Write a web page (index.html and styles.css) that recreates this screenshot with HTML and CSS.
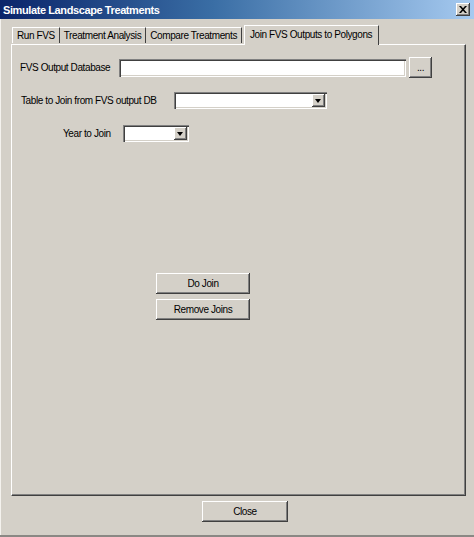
FILE: index.html
```html
<!DOCTYPE html>
<html lang="en">
<head>
  <meta charset="UTF-8">
  <title>Simulate Landscape Treatments</title>
  <link rel="stylesheet" href="styles.css">
</head>
<body>
  <div class="window">
    <!-- title bar -->
    <div class="titlebar">
      <span class="title">Simulate Landscape Treatments</span>
      <span class="close-x">
        <svg width="8" height="7" viewBox="0 0 8 7"><path d="M0 0h2l2 2.3L6 0h2L5 3.5 8 7H6L4 4.7 2 7H0l3-3.5z" fill="#000"/></svg>
      </span>
    </div>

    <!-- tab strip -->
    <div class="tabs">
      <div class="tab">Run FVS</div>
      <div class="tab">Treatment Analysis</div>
      <div class="tab">Compare Treatments</div>
      <div class="tab active">Join FVS Outputs to Polygons</div>
    </div>

    <!-- tab page -->
    <div class="panel">
      <div class="row row-db">
        <label class="lbl lbl-db">FVS Output Database</label>
        <div class="textbox tb-db"></div>
        <button class="btn btn-browse">...</button>
      </div>
      <div class="row row-table">
        <label class="lbl lbl-table">Table to Join from FVS output DB</label>
        <div class="combo combo-table"><span class="arrow"></span></div>
      </div>
      <div class="row row-year">
        <label class="lbl lbl-year">Year to Join</label>
        <div class="combo combo-year"><span class="arrow"></span></div>
      </div>
      <div class="actions">
        <button class="btn btn-wide">Do Join</button>
        <button class="btn btn-wide">Remove Joins</button>
      </div>
    </div>

    <div class="footer">
      <button class="btn btn-close">Close</button>
    </div>
  </div>
</body>
</html>
```

FILE: styles.css
```css
/* classic windows dialog */
body {
  margin: 0;
  font-family: "Liberation Sans", Arial, sans-serif;
  font-size: 10px;
  letter-spacing: -0.4px;
  color: #000;
  background: #d4d0c8;
}
.window {
  width: 474px;
  height: 537px;
  box-sizing: border-box;
  background: #d4d0c8;
  box-shadow: inset 1px 0 #f4f2ee;
  border-bottom: 2px solid #8a8884;
  overflow: hidden;
}
.titlebar {
  height: 19px;
  display: flex;
  align-items: center;
  justify-content: space-between;
  padding: 0 4px 0 3px;
  background: linear-gradient(to right, #0a246a 0%, #3a6ea5 45%, #a6caf0 100%);
}
.title {
  color: #fff;
  font-weight: bold;
  font-size: 11px;
}
.close-x {
  width: 14px;
  height: 13px;
  display: flex;
  align-items: center;
  justify-content: center;
  background: #d4d0c8;
  box-shadow: inset -1px -1px #404040, inset 1px 1px #fff, inset -2px -2px #808080;
}
/* tabs */
.tabs {
  display: flex;
  align-items: flex-end;
  margin-top: 6px;
  padding-left: 12px;
  height: 19px;
  position: relative;
  z-index: 1;
}
.tab {
  height: 16px;
  line-height: 16px;
  padding: 0 4px;
  border-top: 1px solid #fff;
  border-left: 1px solid #fff;
  border-right: 1px solid #404040;
  box-sizing: border-box;
  margin-bottom: 1px;
  white-space: nowrap;
}
.tab + .tab {
  border-left: none;
}
.tab.active {
  height: 20px;
  line-height: 17px;
  margin-left: 2px;
  margin-bottom: -1px;
  padding: 0 6px 0 5px;
  border-left: 1px solid #fff;
  background: #d4d0c8;
}
.panel {
  margin-left: 11px;
  width: 455px;
  height: 452px;
  box-sizing: border-box;
  border-top: 1px solid #fff;
  border-left: 1px solid #fff;
  border-right: 1px solid #404040;
  border-bottom: 1px solid #404040;
  box-shadow: inset -1px -1px #808080;
  display: flex;
  flex-direction: column;
}
.row {
  display: flex;
  align-items: center;
}
.lbl {
  flex: none;
  white-space: nowrap;
}
.row-db {
  margin-top: 12px;
  padding-left: 8px;
  height: 21px;
}
.lbl-db {
  width: 99px;
}
.textbox,
.combo {
  flex: none;
  background: #fff;
  box-sizing: border-box;
  box-shadow: inset 1px 1px #808080, inset 2px 2px #404040, inset -1px -1px #fff, inset -2px -2px #d4d0c8;
}
.tb-db {
  width: 287px;
  height: 18px;
}
.btn {
  font: inherit;
  letter-spacing: inherit;
  color: #000;
  background: #d4d0c8;
  border: none;
  padding: 0;
  box-shadow: inset -1px -1px #404040, inset 1px 1px #fff, inset -2px -2px #808080;
}
.btn-browse {
  flex: none;
  width: 23px;
  height: 21px;
  margin-left: 3px;
  line-height: 17px;
}
.row-table {
  margin-top: 14px;
  padding-left: 9px;
}
.lbl-table {
  width: 153px;
}
.combo {
  position: relative;
  height: 17px;
}
.combo-table {
  width: 153px;
}
.row-year {
  margin-top: 16px;
  padding-left: 51px;
}
.lbl-year {
  width: 60px;
}
.combo-year {
  width: 66px;
}
.arrow {
  position: absolute;
  right: 2px;
  top: 2px;
  width: 13px;
  height: 13px;
  background: #d4d0c8;
  box-shadow: inset -1px -1px #404040, inset 1px 1px #fff, inset -2px -2px #808080;
}
.arrow::after {
  content: "";
  position: absolute;
  left: 3px;
  top: 5px;
  border-left: 3.5px solid transparent;
  border-right: 3.5px solid transparent;
  border-top: 4px solid #000;
}
.actions {
  margin-top: 131px;
  margin-left: 144px;
  display: flex;
  flex-direction: column;
  gap: 5px;
}
.btn-wide {
  width: 94px;
  height: 21px;
}
.footer {
  padding-top: 5px;
  padding-left: 202px;
}
.btn-close {
  width: 86px;
  height: 21px;
}
```
